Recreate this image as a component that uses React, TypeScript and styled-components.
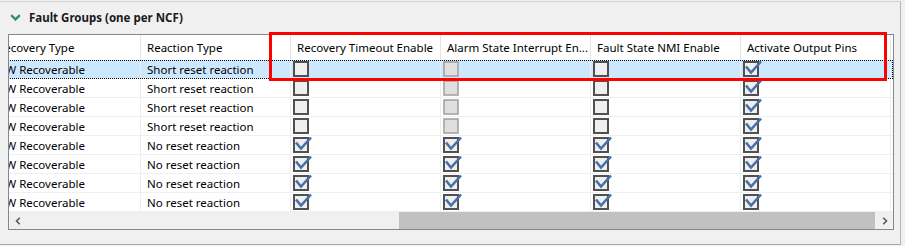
import React from 'react';
import styled, { createGlobalStyle } from 'styled-components';

type Check = 'on' | 'off' | 'disabled';

interface FaultRow {
    recovery: string;
    reaction: string;
    checks: Check[];
}

const COL_W = 150;

const headers = [
    'Recovery Type',
    'Reaction Type',
    'Recovery Timeout Enable',
    'Alarm State Interrupt En...',
    'Fault State NMI Enable',
    'Activate Output Pins',
];

const shortRow: Check[] = ['off', 'disabled', 'off', 'on'];
const noRow: Check[] = ['on', 'on', 'on', 'on'];

const rows: FaultRow[] = [
    { recovery: 'HW Recoverable', reaction: 'Short reset reaction', checks: shortRow },
    { recovery: 'HW Recoverable', reaction: 'Short reset reaction', checks: shortRow },
    { recovery: 'HW Recoverable', reaction: 'Short reset reaction', checks: shortRow },
    { recovery: 'HW Recoverable', reaction: 'Short reset reaction', checks: shortRow },
    { recovery: 'HW Recoverable', reaction: 'No reset reaction', checks: noRow },
    { recovery: 'HW Recoverable', reaction: 'No reset reaction', checks: noRow },
    { recovery: 'HW Recoverable', reaction: 'No reset reaction', checks: noRow },
    { recovery: 'HW Recoverable', reaction: 'No reset reaction', checks: noRow },
];

const GlobalStyle = createGlobalStyle`
    body {
        margin: 0;
        background: #f0f0f0;
        font-family: "Noto Sans", "Open Sans", sans-serif;
        font-size: 11.5px;
        color: #000;
    }
`;

const CheckBox = ({ state }: { state: Check }) => {
    const disabled = state === 'disabled';
    return (
        <svg width="20" height="17" viewBox="0 0 20 17" style={{ overflow: 'visible' }}>
            <rect
                x="1"
                y="1"
                width="14"
                height="14"
                fill={disabled ? '#dfdfdf' : '#efefef'}
                stroke={disabled ? '#a3a3a3' : '#505050'}
                strokeWidth={disabled ? 1.6 : 2}
            />
            {state === 'on' && (
                <path d="M3 5.5 L8 11.5 L18 0.5" fill="none" stroke="#4670a8" strokeWidth="2.6" />
            )}
        </svg>
    );
};

const App = () => {
    return (
        <>
            <GlobalStyle />
            <Page>
                <Section>
                    <SectionHeader>
                        <svg width="11" height="7" viewBox="0 0 11 7">
                            <path d="M1.2 1.2 L5.5 5.4 L9.8 1.2" fill="none" stroke="#378a7c" strokeWidth="2.4" />
                        </svg>
                        <Title>Fault Groups (one per NCF)</Title>
                    </SectionHeader>

                    <TableFrame>
                        <Viewport>
                            <Content>
                                <HeaderRow>
                                    {headers.map((h) => (
                                        <HeaderCell key={h}>{h}</HeaderCell>
                                    ))}
                                </HeaderRow>
                                {rows.map((r, i) => (
                                    <Row key={i} $selected={i === 0}>
                                        <TextCell>{r.recovery}</TextCell>
                                        <TextCell>{r.reaction}</TextCell>
                                        {r.checks.map((c, j) => (
                                            <CheckCell key={j}>
                                                <CheckBox state={c} />
                                            </CheckCell>
                                        ))}
                                    </Row>
                                ))}
                            </Content>
                        </Viewport>
                        <ScrollBar>
                            <ArrowButton>
                                <svg width="6" height="8" viewBox="0 0 6 8">
                                    <path d="M4.8 0.8 L1.5 4 L4.8 7.2" fill="none" stroke="#5a5a5a" strokeWidth="1.6" />
                                </svg>
                            </ArrowButton>
                            <Track>
                                <Thumb $left={373} $width={476} />
                            </Track>
                            <ArrowButton>
                                <svg width="6" height="8" viewBox="0 0 6 8">
                                    <path d="M1.2 0.8 L4.5 4 L1.2 7.2" fill="none" stroke="#5a5a5a" strokeWidth="1.6" />
                                </svg>
                            </ArrowButton>
                        </ScrollBar>
                    </TableFrame>

                    <Annotation />
                </Section>
            </Page>
        </>
    );
};

export default App;

const Page = styled.div`
    padding-top: 1px;
    width: 905px;
    height: 246px;
    box-sizing: border-box;
    overflow: hidden;
`;

const Section = styled.div`
    position: relative;
    width: 901px;
    height: 244px;
    box-sizing: border-box;
    border-top: 1px solid #d2d2d2;
    border-right: 1px solid #b4b4b4;
    border-bottom: 1px solid #a9a9a9;
    background: #f0f0f0;
`;

const SectionHeader = styled.div`
    display: flex;
    align-items: center;
    gap: 8px;
    height: 32px;
    padding-left: 10px;
    padding-bottom: 1px;
    box-sizing: border-box;
`;

const Title = styled.span`
    font-weight: 700;
    font-size: 11.5px;
    color: #1a1a1a;
`;

const TableFrame = styled.div`
    margin-left: 8px;
    width: 886px;
    height: 196px;
    box-sizing: border-box;
    border: 1px solid #828790;
    background: #fff;
    display: flex;
    flex-direction: column;
`;

const Viewport = styled.div`
    flex: 1;
    overflow: hidden;
`;

const Content = styled.div`
    margin-left: -18px;
    width: 902px;
    display: flex;
    flex-direction: column;
`;

const HeaderRow = styled.div`
    display: flex;
    height: 25px;
    background: #fff;
`;

const HeaderCell = styled.div`
    width: ${COL_W}px;
    flex: none;
    box-sizing: border-box;
    padding-left: 6px;
    border-right: 1px solid #e5e5e5;
    display: flex;
    align-items: center;
    white-space: nowrap;
    overflow: hidden;
`;

const Row = styled.div<{ $selected?: boolean }>`
    display: flex;
    height: 19px;
    box-sizing: border-box;
    border-bottom: 1px solid #f0f0f0;
    background: ${(p) => (p.$selected ? '#cce8ff' : '#fff')};
    outline: ${(p) => (p.$selected ? '1px dotted #000' : 'none')};
    outline-offset: -1px;
`;

const TextCell = styled.div`
    width: ${COL_W}px;
    flex: none;
    box-sizing: border-box;
    padding-left: 6px;
    border-right: 1px solid #eceef2;
    display: flex;
    align-items: center;
    white-space: nowrap;
    overflow: hidden;
`;

const CheckCell = styled.div`
    width: ${COL_W}px;
    flex: none;
    box-sizing: border-box;
    padding: 1px 0 0 2px;
    border-right: 1px solid #eceef2;
    display: flex;
    align-items: flex-start;
`;

const ScrollBar = styled.div`
    display: flex;
    height: 17px;
    flex: none;
    background: #f0f0f0;
`;

const ArrowButton = styled.div`
    width: 17px;
    display: flex;
    align-items: center;
    justify-content: center;
`;

const Track = styled.div`
    flex: 1;
    display: flex;
`;

const Thumb = styled.div<{ $left: number; $width: number }>`
    margin-left: ${(p) => p.$left}px;
    width: ${(p) => p.$width}px;
    background: #c1c1c1;
`;

const Annotation = styled.div`
    position: absolute;
    left: 269px;
    top: 30px;
    width: 618px;
    height: 49px;
    box-sizing: border-box;
    border: 3px solid #ff0000;
    pointer-events: none;
`;
